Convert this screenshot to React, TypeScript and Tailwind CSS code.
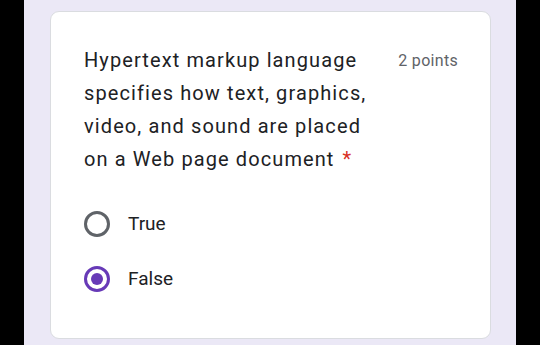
export default function App() {
  return (
    <div className="flex h-[345px] w-[540px] bg-black" style={{ fontFamily: "Roboto, 'Liberation Sans', sans-serif" }}>
      <div className="ml-[24px] flex w-[492px] flex-col bg-[#ebe8f6] pl-[26px] pr-[25px] pt-[11px]">
        <div className="h-[328px] rounded-[9px] border border-[#dadce0] bg-white pl-[33px] pr-[32px] pt-[32px]">
          <div className="flex items-start justify-between">
            <p className="text-[20px] leading-[33px] tracking-[1.1px] text-[#202124]">
              Hypertext markup language
              <br />
              specifies how text, graphics,
              <br />
              video, and sound are placed
              <br />
              on a Web page document
              <span className="ml-[8px] text-[#d93025]">*</span>
            </p>
            <span className="pt-[5px] text-[16px] leading-[24px] tracking-[0.3px] text-[#5f6368]">2 points</span>
          </div>
          <div className="mt-[35px] flex flex-col gap-[29px]">
            <Option label="True" />
            <Option label="False" checked />
          </div>
        </div>
      </div>
    </div>
  );
}

function Option({ label, checked }: { label: string; checked?: boolean }) {
  return (
    <div className="flex items-center gap-[18px]">
      <div
        className={
          checked
            ? "flex h-[26px] w-[26px] items-center justify-center rounded-full border-[3px] border-[#673ab7]"
            : "flex h-[26px] w-[26px] items-center justify-center rounded-full border-[3px] border-[#5f6368]"
        }
      >
        {checked && <div className="h-[12px] w-[12px] rounded-full bg-[#673ab7]" />}
      </div>
      <span className="text-[19px] leading-[26px] text-[#202124]">{label}</span>
    </div>
  );
}
